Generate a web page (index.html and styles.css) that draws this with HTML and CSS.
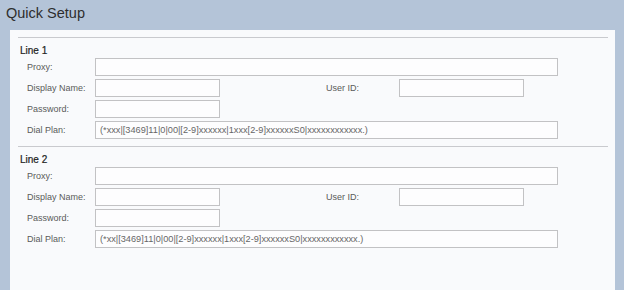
FILE: index.html
```html
<!DOCTYPE html>
<html lang="en">
<head>
    <meta charset="UTF-8">
    <meta name="viewport" content="width=device-width, initial-scale=1.0">
    <title>Quick Setup</title>
    <link rel="stylesheet" href="styles.css">
</head>
<body>
    <h1 class="page-title">Quick Setup</h1>
    <div class="panel">
        <div class="section">
            <div class="section-title">Line 1</div>
            <div class="row">
                <label class="label">Proxy:</label>
                <input type="text" class="field wide">
            </div>
            <div class="row">
                <label class="label">Display Name:</label>
                <input type="text" class="field short">
                <label class="label user-label">User ID:</label>
                <input type="text" class="field short">
            </div>
            <div class="row">
                <label class="label">Password:</label>
                <input type="password" class="field short">
            </div>
            <div class="row">
                <label class="label">Dial Plan:</label>
                <input type="text" class="field wide" value="(*xxx|[3469]11|0|00|[2-9]xxxxxx|1xxx[2-9]xxxxxxS0|xxxxxxxxxxxx.)">
            </div>
        </div>
        <div class="section">
            <div class="section-title">Line 2</div>
            <div class="row">
                <label class="label">Proxy:</label>
                <input type="text" class="field wide">
            </div>
            <div class="row">
                <label class="label">Display Name:</label>
                <input type="text" class="field short">
                <label class="label user-label">User ID:</label>
                <input type="text" class="field short">
            </div>
            <div class="row">
                <label class="label">Password:</label>
                <input type="password" class="field short">
            </div>
            <div class="row">
                <label class="label">Dial Plan:</label>
                <input type="text" class="field wide" value="(*xx|[3469]11|0|00|[2-9]xxxxxx|1xxx[2-9]xxxxxxS0|xxxxxxxxxxxx.)">
            </div>
        </div>
    </div>
</body>
</html>
```

FILE: styles.css
```css
* {
    box-sizing: border-box;
    margin: 0;
    padding: 0;
}
body {
    background-color: #b4c4d8;
    font-family: "Liberation Sans", Arial, sans-serif;
    color: #555;
    height: 290px;
    overflow: hidden;
}
.page-title {
    height: 30px;
    padding: 2px 0 0 6px;
    font-size: 14.5px;
    line-height: 22px;
    font-weight: normal;
    color: #2e2e2e;
}
.panel {
    margin: 0 9px 0 10px;
    height: 260px;
    padding: 7px 7px 0 8px;
    background-color: #f9fafc;
}
.section {
    border-top: 1px solid #c9cace;
    padding: 6px 0 7px 9px;
    display: flex;
    flex-direction: column;
    gap: 3px;
}
.section-title {
    margin: 0 0 -3px -7px;
    font-size: 10px;
    line-height: 14px;
    color: #222;
    -webkit-text-stroke: 0.2px #222;
}
.row {
    display: flex;
    align-items: center;
    height: 18px;
}
.label {
    width: 68px;
    font-size: 9px;
    color: #5a5a5a;
}
.user-label {
    width: 73px;
    margin-left: 106px;
}
.field {
    height: 18px;
    border: 1px solid #c2c2c4;
    background-color: #fdfdfe;
    padding: 0 4px;
    font-family: "Liberation Sans", Arial, sans-serif;
    font-size: 9.2px;
    color: #666;
    outline: none;
}
.wide {
    width: 463px;
}
.short {
    width: 125px;
}
```
